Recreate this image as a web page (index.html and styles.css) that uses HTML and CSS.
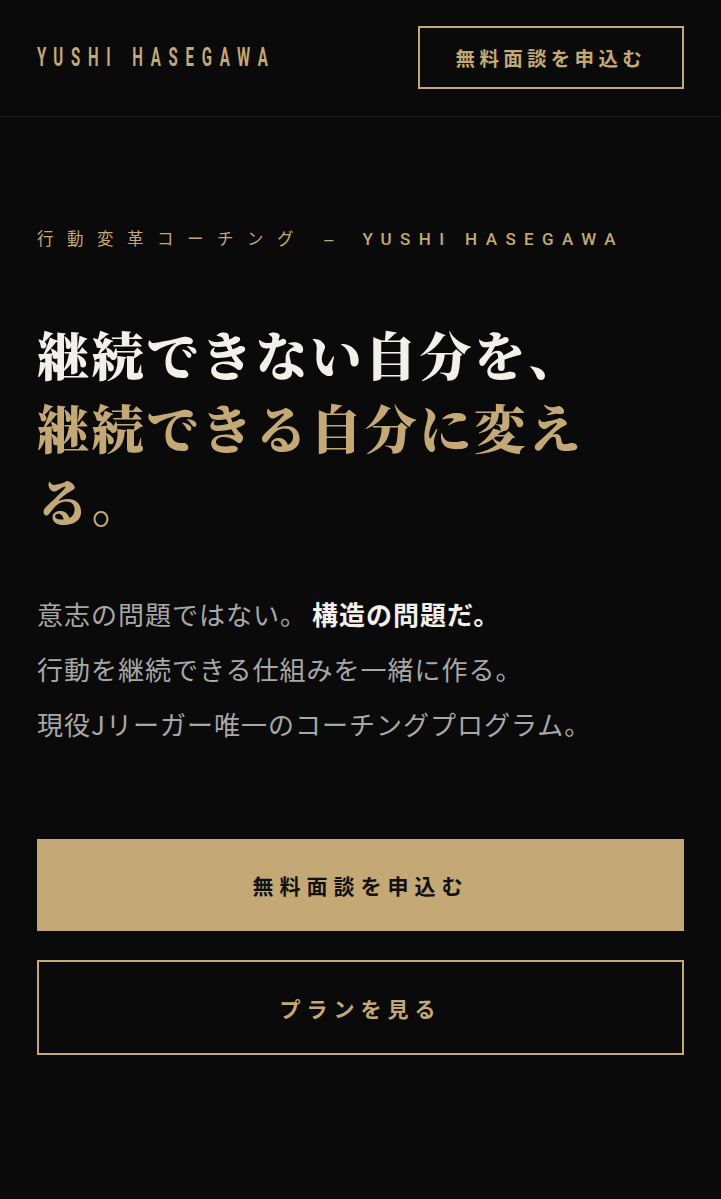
FILE: index.html
```html
<!DOCTYPE html>
<html lang="ja">
<head>
<meta charset="utf-8">
<title>YUSHI HASEGAWA</title>
<link rel="stylesheet" href="styles.css">
</head>
<body>
<header class="site-header">
  <div class="logo"><span class="logo-text">YUSHI HASEGAWA</span></div>
  <a class="header-cta" href="#">無料面談を申込む</a>
</header>
<main class="hero">
  <p class="eyebrow">行動変革コーチング <span class="dash">–</span> <span class="latin">YUSHI HASEGAWA</span></p>
  <h1 class="headline"><span class="light">継続できない自分を、</span><br><span class="gold">継続できる自分に変える。</span></h1>
  <p class="lead">意志の問題ではない。<strong>構造の問題だ。</strong><br>行動を継続できる仕組みを一緒に作る。<br>現役Jリーガー唯一のコーチングプログラム。</p>
  <div class="actions">
    <a class="btn btn-primary" href="#">無料面談を申込む</a>
    <a class="btn btn-outline" href="#">プランを見る</a>
  </div>
</main>
</body>
</html>
```

FILE: styles.css
```css
* { box-sizing: border-box; }

body {
  margin: 0;
  background: #0a0a0a;
  font-family: "Noto Sans CJK JP", "Noto Sans", sans-serif;
  color: #a8a8a8;
}

a { text-decoration: none; }

.site-header {
  display: flex;
  justify-content: space-between;
  align-items: center;
  padding: 26px 37px 27px;
  border-bottom: 1px solid #1c1c1c;
}

.logo {
  width: 240px;
  height: 28px;
}

.logo-text {
  display: inline-block;
  font-family: "Roboto", "Liberation Sans", sans-serif;
  font-weight: 700;
  font-size: 25px;
  line-height: 28px;
  letter-spacing: 12.9px;
  word-spacing: 4px;
  color: #c4a876;
  white-space: nowrap;
  transform: scaleX(0.6);
  transform-origin: left center;
}

.header-cta {
  display: flex;
  align-items: center;
  height: 63px;
  padding: 0 36px;
  border: 2px solid #c4a876;
  color: #c4a876;
  font-size: 19.5px;
  font-weight: 700;
  letter-spacing: 4.3px;
}

.hero {
  padding: 109px 37px 0;
}

.eyebrow {
  margin: 0;
  font-size: 16.5px;
  line-height: 24px;
  letter-spacing: 13.5px;
  color: #c4a876;
  white-space: nowrap;
}

.eyebrow .dash {
  font-family: "Liberation Sans", sans-serif;
  letter-spacing: 12px;
}

.eyebrow .latin {
  font-family: "Roboto", "Liberation Sans", sans-serif;
  font-weight: 500;
  font-size: 17px;
  letter-spacing: 8.4px;
}

.headline {
  margin: 66px 0 0;
  font-family: "Noto Serif CJK JP", "Noto Sans CJK JP", serif;
  font-size: 52px;
  line-height: 73px;
  letter-spacing: 2.6px;
  font-weight: 900;
}

.headline .light { color: #f3f0ea; }
.headline .gold { color: #c4a876; }

.lead {
  margin: 50px 0 0;
  font-size: 26px;
  line-height: 55px;
  letter-spacing: 1px;
  font-weight: 400;
  color: #a8a8a8;
}

.lead strong {
  margin-left: 5px;
  color: #f3f0ea;
  font-weight: 700;
}

.actions {
  margin-top: 88px;
  display: flex;
  flex-direction: column;
  gap: 29px;
}

.btn {
  display: flex;
  align-items: center;
  justify-content: center;
  border: 2px solid #c4a876;
  font-size: 21px;
  font-weight: 700;
  letter-spacing: 6px;
}

.btn-primary {
  height: 92px;
  background: #c4a876;
  color: #111;
}

.btn-outline {
  height: 95px;
  background: transparent;
  color: #c4a876;
}
```
